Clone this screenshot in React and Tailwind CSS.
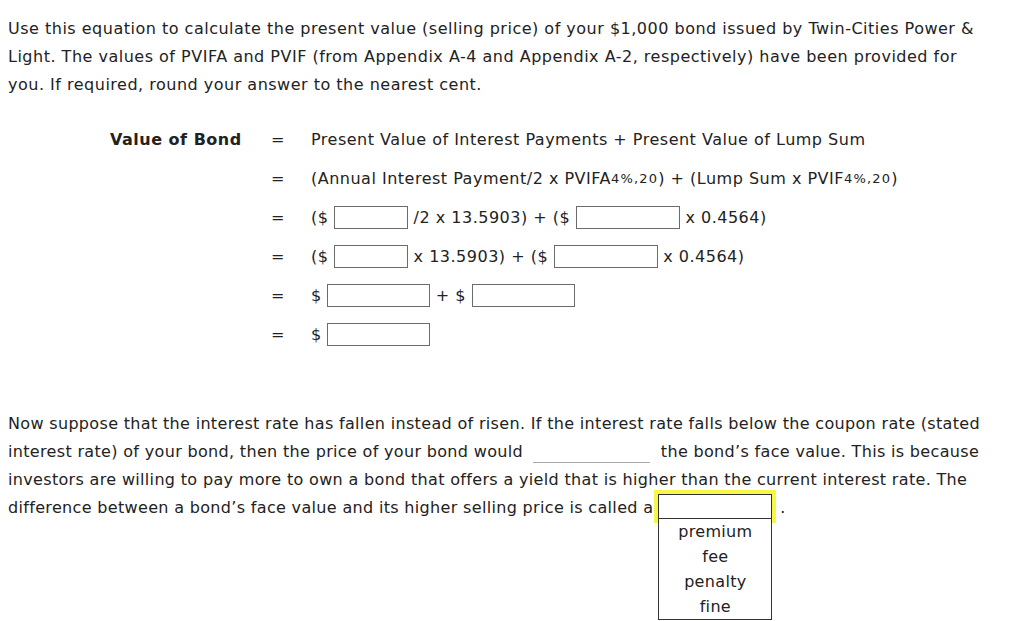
function Box({ w }) {
  return <span className={`inline-block h-[23px] border border-[#6b6b6b] bg-white align-[-6px] ${w}`} />;
}

function Sup() {
  return <sup className="relative top-[-1px] text-[13px] tracking-[1.2px]">4%,20</sup>;
}

function Row({ label, children }) {
  return (
    <div className="grid h-[39px] grid-cols-[156px_45px_1fr] items-center">
      <div className="font-bold">{label}</div>
      <div className="pl-[5px]">=</div>
      <div className="whitespace-nowrap">{children}</div>
    </div>
  );
}

export default function App() {
  return (
    <div className="min-h-[621px] bg-white px-2 pt-[15px] font-['DejaVu_Sans',Verdana,sans-serif] text-[16px] leading-[28px] tracking-[0.5px] text-[#222]">
      <p>
        Use this equation to calculate the present value (selling price) of your $1,000 bond issued by Twin-Cities Power &amp;
        <br />
        Light. The values of PVIFA and PVIF (from Appendix A-4 and Appendix A-2, respectively) have been provided for
        <br />
        you. If required, round your answer to the nearest cent.
      </p>

      <div className="mt-[21px] pl-[102px]">
        <Row label="Value of Bond">Present Value of Interest Payments + Present Value of Lump Sum</Row>
        <Row label="">
          (Annual Interest Payment/2 x PVIFA<Sup />) + (Lump Sum x PVIF<Sup />)
        </Row>
        <Row label="">
          ($ <Box w="w-[74px]" /> /2 x 13.5903) + ($ <Box w="w-[104px]" /> x 0.4564)
        </Row>
        <Row label="">
          ($ <Box w="w-[74px]" /> x 13.5903) + ($ <Box w="w-[104px]" /> x 0.4564)
        </Row>
        <Row label="">
          $ <Box w="w-[103px]" /> + $ <Box w="w-[103px]" />
        </Row>
        <Row label="">
          $ <Box w="w-[103px]" />
        </Row>
      </div>

      <p className="mt-[56px] tracking-[0.33px]">
        Now suppose that the interest rate has fallen instead of risen. If the interest rate falls below the coupon rate (stated
        <br />
        interest rate) of your bond, then the price of your bond would{' '}
        <span className="mx-[5px] inline-block h-[20px] w-[117px] border-b border-[#aaa] align-[-6px]" />{' '}
        the bond’s face value. This is because
        <br />
        investors are willing to pay more to own a bond that offers a yield that is higher than the current interest rate. The
        <br />
        difference between a bond’s face value and its higher selling price is called a
        <span className="relative ml-[5px] mr-[8px] inline-block h-[25px] w-[114px] border border-[#333] bg-white align-[-6px] outline-4 outline-[#f7f74a]">
          <span className="absolute left-[-1px] top-[23px] z-10 flex w-[114px] flex-col border border-[#333] bg-white text-center leading-[25px]">
            <span>premium</span>
            <span>fee</span>
            <span>penalty</span>
            <span>fine</span>
          </span>
        </span>
        .
      </p>
    </div>
  );
}
